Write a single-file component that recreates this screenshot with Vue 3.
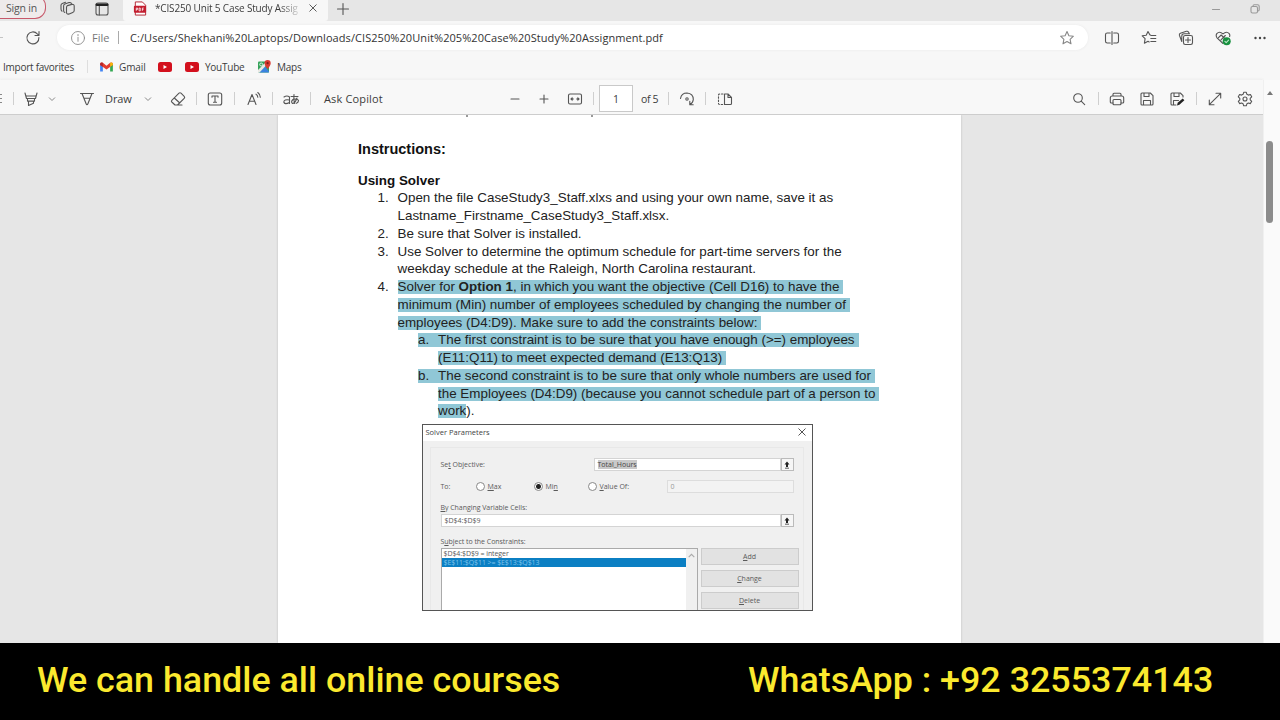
<script setup>
const steps = [
    { num: '1.', text: 'Open the file CaseStudy3_Staff.xlxs and using your own name, save it as' },
    { text: 'Lastname_Firstname_CaseStudy3_Staff.xlsx.' },
    { num: '2.', text: 'Be sure that Solver is installed.' },
    { num: '3.', text: 'Use Solver to determine the optimum schedule for part-time servers for the' },
    { text: 'weekday schedule at the Raleigh, North Carolina restaurant.' },
];
const subSteps = [
    { num: 'a.', text: 'The first constraint is to be sure that you have enough (>=) employees' },
    { text: '(E11:Q11) to meet expected demand (E13:Q13)' },
    { num: 'b.', text: 'The second constraint is to be sure that only whole numbers are used for' },
    { text: 'the Employees (D4:D9) (because you cannot schedule part of a person to' },
];
</script>

<template>
    <div class="screen">
        <div class="tabs">
            <div class="sign-in">Sign in</div>
            <svg class="icon workspaces" viewBox="0 0 16 16">
                <path d="M7.500 4.600l4.300-1.200q2.400-.3 2.400 1.700v4.300q0 1.500-1.500 2l-3.500 1.500q-2.700.8-2.700-1.700V6.600q0-1.500 1-2z M4.800 11.500Q3.600 11 3.600 9.500V5q0-1.500 1.300-2L9 1.600q1.500-.4 2.400.7 M2 10.200Q1 9.500 1 8V4.300Q1 3 2.300 2.400L5.500 1.200" />
            </svg>
            <svg class="icon vertical-tabs" viewBox="0 0 16 16">
                <rect x="2" y="2" width="12" height="12" rx="2" />
                <path d="M5.300 5v9" />
                <path class="heavy" d="M2.800 3.800h10.400" />
            </svg>
            <div class="tab">
                <svg class="pdf" viewBox="0 0 14 16">
                    <path d="M2 1h7.500L13 4.500V15H2z" fill="#fff" stroke="#b3202e" />
                    <rect x="0.5" y="5" width="13" height="7.5" rx="1" fill="#c31f30" />
                    <path d="M3 10.5v-3h1.400v1.500H3 M6 7.500v3h1.300V7.500z M9.500 10.500v-3H11 M9.500 9h1.200" fill="none" stroke="#fff" stroke-width="0.8" />
                </svg>
                <span class="tab-title">*CIS250 Unit 5 Case Study Assig</span>
                <svg class="icon close" viewBox="0 0 16 16"><path d="M4.300 4.300l7.400 7.400 M11.700 4.300l-7.400 7.400" /></svg>
            </div>
            <svg class="icon plus" viewBox="0 0 16 16"><path d="M8 2.500v11 M2.500 8h11" /></svg>
            <svg class="icon minimize" viewBox="0 0 16 16"><path d="M4.500 8.500h7" /></svg>
            <svg class="icon restore" viewBox="0 0 16 16">
                <rect x="4" y="5.500" width="6.500" height="6.500" rx="1.500" />
                <path d="M6 5.300V5q0-1.200 1.200-1.200h3.300Q12.200 3.800 12.200 5.500v3.300q0 1.200-1.200 1.200" />
            </svg>
        </div>

        <div class="address-bar">
            <span class="back-tip"></span>
            <svg class="icon reload" viewBox="0 0 16 16">
                <path d="M13.900 7.500A6 6 0 1 1 12.300 3.800L14 5.400 M14 1.500v4h-4" />
            </svg>
            <div class="url">
                <svg class="icon info" viewBox="0 0 16 16"><circle cx="8" cy="8" r="6.500" /><path d="M8 7.300v4 M8 4.500v1.200" /></svg>
                <span class="file">File</span>
                <span class="rule"></span>
                <span class="path">C:/Users/Shekhani%20Laptops/Downloads/CIS250%20Unit%205%20Case%20Study%20Assignment.pdf</span>
                <svg class="icon star" viewBox="0 0 16 16">
                    <path d="M8 1.600l1.900 4.100 4.500.5-3.300 3.100.9 4.500L8 11.600l-4 2.200.9-4.500L1.600 6.200l4.500-.5z" />
                </svg>
            </div>
            <div class="actions">
                <svg class="icon" viewBox="0 0 16 16">
                    <path d="M8 1.500v13 M6.300 3H3.200Q1.500 3 1.500 4.700v6.600Q1.500 13 3.200 13h3.100 M9.700 3h3.100q1.700 0 1.700 1.700v6.600q0 1.700-1.700 1.700H9.700" />
                </svg>
                <svg class="icon" viewBox="0 0 16 16">
                    <path d="M9.700 5.200 8.800 4.800 7 1.500 5.200 5.200l-4 .6 2.900 2.900-.7 4.500L7 11.300l1.200.7 M10.300 5.500h4.500 M9.800 8.500h5 M9.800 11.500h5" />
                </svg>
                <svg class="icon" viewBox="0 0 16 16">
                    <rect x="5.500" y="5.500" width="9" height="9" rx="1.700" />
                    <path d="M10 7.500v5 M7.500 10h5 M3.800 11.500 1.400 5.200Q1 3.800 2.400 3.300L8.400 1.300q1.500-.4 2.200 1l.6 1.300 M3.800 11.500V6q0-2.300 2.300-2.300h5.400" />
                </svg>
                <svg class="icon" viewBox="0 0 16 16">
                    <path d="M8 13.500 2 7.800Q.5 5.500 1.800 3.600 4.500.7 8 3.900 11.500.7 14.200 3.600 15.200 5 14.600 6.600 M3.500 7.700 6.200 5l4 4 M6 9.800 8.300 7.500l2-2" />
                    <circle class="health-dot" cx="11.700" cy="11.300" r="4" />
                    <path class="health-tick" d="M9.900 11.300l1.300 1.300 2.400-2.500" />
                </svg>
                <svg class="icon dots" viewBox="0 0 16 16">
                    <circle cx="3.500" cy="8" r="1.200" /><circle cx="8" cy="8" r="1.200" /><circle cx="12.500" cy="8" r="1.200" />
                </svg>
            </div>
        </div>

        <div class="favorites">
            <span class="import">Import favorites</span>
            <span class="rule"></span>
            <svg class="gmail" viewBox="0 0 14 11">
                <path d="M0 1.500V10.500h3V5z" fill="#4285f4" />
                <path d="M14 1.500V10.500h-3V5z" fill="#34a853" />
                <path d="M0 1.800Q.8-.4 3 .9l4 3.200L11 .9q2.200-1.300 3 .9v1.500L7 8.300 0 3.300z" fill="#e33b2e" />
                <path d="M0 1.800Q.8-.4 3 .9v4.400L0 3.200z" fill="#b3262a" />
                <path d="M14 1.800Q13.200-.4 11 .9v4.400l3-2.100z" fill="#f6b90a" />
            </svg>
            <span class="gmail-label">Gmail</span>
            <svg class="youtube" viewBox="0 0 14 10"><rect width="14" height="10" rx="2.500" fill="#d3101d" /><path d="M5.500 3v4L9 5z" fill="#fff" /></svg>
            <svg class="youtube second" viewBox="0 0 14 10"><rect width="14" height="10" rx="2.500" fill="#d3101d" /><path d="M5.500 3v4L9 5z" fill="#fff" /></svg>
            <span class="youtube-label">YouTube</span>
            <svg class="maps" viewBox="0 0 13 13">
                <rect y="1.500" width="11" height="11" rx="1" fill="#35a35a" />
                <path d="M1 12.500 7 6.500l4 5v1z" fill="#3b82e0" />
                <path d="M0 10 8.500 1.500 10 3.500 1.500 12.500H0z" fill="#e9e9e4" />
                <circle cx="3.200" cy="4.500" r="1.500" fill="none" stroke="#fff" stroke-width=".8" />
                <path d="M9.500 9Q6.500 5.500 6.500 3.200a3.100 3.100 0 0 1 6.200 0Q12.700 5.500 9.500 9z" fill="#d93a30" />
                <circle cx="9.600" cy="3.200" r="1.100" fill="#7c1c18" />
            </svg>
            <span class="maps-label">Maps</span>
        </div>

        <div class="viewer">
            <div class="reader">
                <div class="toolbar">
                    <div class="tools left">
                        <span class="contents-tip"></span>
                        <span class="rule r1"></span>
                        <svg class="icon highlighter" viewBox="0 0 16 16"><path d="M2 2l1.500 5.500h9L14 2 M3.300 5h9.400 M4.500 7.500v2.600h7V7.500 M5.500 10.200v4.300l5-2.300v-2" /></svg>
                        <svg class="chevron c1" viewBox="0 0 8 8"><path d="M1 2.500l3 3 3-3" /></svg>
                        <svg class="icon pen" viewBox="0 0 16 16"><path d="M1.500 2.500h13 M3 2.500 7 12.500q1 2.500 2 0L13 2.500 M5 7.300h6" /></svg>
                        <span class="draw">Draw</span>
                        <svg class="chevron c2" viewBox="0 0 8 8"><path d="M1 2.500l3 3 3-3" /></svg>
                        <svg class="icon eraser" viewBox="0 0 16 16"><path d="M1.800 9.400 9 2.200q1-1 2 0l3.200 3.200q1 1 0 2L7.500 14H5L1.800 11q-.8-.8 0-1.600z M4.300 7l5.500 5 M7.500 14H12" /></svg>
                        <span class="rule r2"></span>
                        <svg class="icon textbox" viewBox="0 0 16 16"><rect x="1.300" y="2" width="13.400" height="12" rx="2" /><path d="M5 6.300V5h6v1.300 M8 5v6.300 M6.500 11.300h3" /></svg>
                        <span class="rule r3"></span>
                        <svg class="icon aloud" viewBox="0 0 16 16"><path d="M2 13.500 6 3.500l4 10 M3.400 10.300h5.200 M10 3.200q1.800 1 1.800 3 M11.800 1.500q2.500 1.800 2.500 4.700" /></svg>
                        <span class="rule r4"></span>
                        <svg class="icon translate" viewBox="0 0 18 16"><path d="M2 6q3-2 5.500 0v6.500 M7.500 9Q2 8 1.800 11q.8 3 5.700.5 M9 5.500h7 M12 3.500q-.5 6 .8 9 M15 7q-2 5.500-4.500 5.500-2-1.700.5-4 4.500-1.500 5.500 1 0 2-2 2.700" /></svg>
                        <span class="rule r5"></span>
                        <span class="copilot">Ask Copilot</span>
                    </div>
                    <div class="tools middle">
                        <svg class="icon" viewBox="0 0 16 16"><path d="M4 8h8" /></svg>
                        <svg class="icon zoom-in" viewBox="0 0 16 16"><path d="M4 8h8 M8 4v8" /></svg>
                        <svg class="icon fit" viewBox="0 0 16 16"><rect x="1.500" y="3" width="13" height="10" rx="1.500" /><path class="solid" d="M3.200 8 5.500 5.800v1.500h1v1.400h-1v1.500z M12.800 8 10.500 5.800v1.500h-1v1.400h1v1.500z" /></svg>
                        <span class="rule r6"></span>
                        <span class="page-no">1</span>
                        <span class="of">of 5</span>
                        <span class="rule r7"></span>
                        <svg class="icon rotate" viewBox="0 0 16 16"><path d="M1.500 7.500Q2.500 2 8 2q6.300.5 6.300 6.500-.3 3.500-3.300 5 M10.800 10.300v3.400h3.400" /><circle cx="8" cy="8" r="1.200" /></svg>
                        <span class="rule r8"></span>
                        <svg class="icon page-view" viewBox="0 0 16 16"><path d="M7.500 3v10.500h6q1 0 1-1V6.500L11 3z M11 3v3.500h3.500" /><path class="dashed" d="M6 3H2.500q-1 0-1 1v8.500q0 1 1 1H6" /></svg>
                    </div>
                    <div class="tools right">
                        <svg class="icon" viewBox="0 0 16 16"><circle cx="7" cy="7" r="4.300" /><path d="M10.200 10.200l3.500 3.500" /></svg>
                        <span class="rule r9"></span>
                        <svg class="icon print" viewBox="0 0 16 16"><path d="M4 5V3.300Q4 2.300 5 2.300h6q1 0 1 1V5 M4 12H2.300Q1.300 12 1.300 11V7q0-2 2-2h9.400q2 0 2 2v4q0 1-1 1H12" /><rect x="4" y="8.500" width="8" height="5.300" rx="1" /></svg>
                        <svg class="icon save" viewBox="0 0 16 16"><path d="M2 3q0-1 1-1h8.300L14 4.700V13q0 1-1 1H3q-1 0-1-1z M5 2v3.500h5V2 M4.500 14V9.500h7V14" /></svg>
                        <svg class="icon save" viewBox="0 0 16 16"><path d="M7 14H3q-1 0-1-1V3q0-1 1-1h8.300L14 4.700V6 M5 2v3.500h5V2 M4.500 14V9.500h5" /><path class="pencil" d="M8 14.500l.7-2.700 5-4.300 1.700 1.700-5 4.600z" /></svg>
                        <span class="rule r10"></span>
                        <svg class="icon expand" viewBox="0 0 16 16"><path d="M2.300 13.700 13.700 2.300 M9 2.300h4.700V7 M2.300 9v4.700H7" /></svg>
                        <svg class="icon settings" viewBox="0 0 16 16"><path d="M6.700 1.300h2.600l.6 2 1.500.8 2-.6 1.300 2.300-1.500 1.500v1.500l1.500 1.500-1.300 2.300-2-.6-1.500.8-.6 2H6.700l-.6-2-1.500-.8-2 .6-1.300-2.300 1.500-1.500V7.300L1.300 5.800l1.300-2.300 2 .6 1.500-.8z" /><circle cx="8" cy="8" r="2" /></svg>
                    </div>
                </div>

                <div class="canvas">
                    <div class="page">
                        <div class="remnant"><i></i><i></i></div>
                        <h1>Instructions:</h1>
                        <h2>Using Solver</h2>
                        <div v-for="(line, i) in steps" :key="i" class="line">
                            <span class="num">{{ line.num }}</span>
                            <span class="copy">{{ line.text }}</span>
                        </div>
                        <div class="line">
                            <span class="num">4.</span>
                            <span class="copy marked">Solver for <b>Option 1</b>, in which you want the objective (Cell D16) to have the</span>
                        </div>
                        <div class="line"><span class="num"></span><span class="copy marked">minimum (Min) number of employees scheduled by changing the number of</span></div>
                        <div class="line"><span class="num"></span><span class="copy marked">employees (D4:D9). Make sure to add the constraints below:</span></div>
                        <div v-for="(line, i) in subSteps" :key="'s' + i" class="line sub">
                            <span class="num" :class="{ marked: line.num }">{{ line.num }}</span>
                            <span class="copy marked">{{ line.text }}</span>
                        </div>
                        <div class="line sub"><span class="num"></span><span class="copy marked tight">work</span><span class="copy">).</span></div>

                        <div class="dialog">
                            <div class="dialog-title">
                                <span>Solver Parameters</span>
                                <svg viewBox="0 0 8 8"><path d="M.5.5l7 7 M7.500.5l-7 7" /></svg>
                            </div>
                            <div class="dialog-body">
                                <div class="row objective">
                                    <label>Se<u>t</u> Objective:</label>
                                    <div class="field"><span class="selected">Total_Hours</span></div>
                                    <div class="picker"><svg viewBox="0 0 8 8"><path d="M4 .5 6.500 3.500H5V6H3V3.500H1.500z M2 6.700h4v.8H2z" /></svg></div>
                                </div>
                                <div class="row target">
                                    <span class="to">To:</span>
                                    <span class="radio"></span><span class="max"><u>M</u>ax</span>
                                    <span class="radio on"></span><span class="min">Mi<u>n</u></span>
                                    <span class="radio"></span><span class="value-of"><u>V</u>alue Of:</span>
                                    <div class="field off">0</div>
                                </div>
                                <div class="caption"><u>B</u>y Changing Variable Cells:</div>
                                <div class="row">
                                    <div class="field">$D$4:$D$9</div>
                                    <div class="picker"><svg viewBox="0 0 8 8"><path d="M4 .5 6.500 3.500H5V6H3V3.500H1.500z M2 6.700h4v.8H2z" /></svg></div>
                                </div>
                                <div class="caption subject">S<u>u</u>bject to the Constraints:</div>
                                <div class="row lists">
                                    <div class="listbox">
                                        <div class="items">
                                            <div class="item">$D$4:$D$9 = integer</div>
                                            <div class="item active">$E$11:$Q$11 &gt;= $E$13:$Q$13</div>
                                        </div>
                                        <div class="list-scroll"><svg viewBox="0 0 8 8"><path d="M1.500 5.500 4 3l2.500 2.500" /></svg></div>
                                    </div>
                                    <div class="buttons">
                                        <div class="button"><u>A</u>dd</div>
                                        <div class="button"><u>C</u>hange</div>
                                        <div class="button"><u>D</u>elete</div>
                                    </div>
                                </div>
                            </div>
                        </div>
                    </div>
                </div>
            </div>
            <div class="scrollbar">
                <span class="up"></span>
                <span class="thumb"></span>
            </div>
        </div>

        <div class="banner">
            <span class="claim">We can handle all online courses</span>
            <span class="phone">WhatsApp : +92 3255374143</span>
        </div>
    </div>
</template>

<style>
body {
    margin: 0;
    overflow: hidden;
}
</style>

<style scoped>
.screen {
    display: flex;
    flex-direction: column;
    width: 1280px;
    height: 720px;
    overflow: hidden;
    background: #f7f7f7;
    color: #3c3c3c;
    font-family: 'Open Sans', 'Noto Sans', sans-serif;
    font-size: 10px;
    white-space: nowrap;
}
.screen * {
    box-sizing: border-box;
    flex-shrink: 0;
}
svg {
    display: block;
}
.icon {
    width: 16px;
    height: 16px;
    fill: none;
    stroke: #555;
    stroke-width: 1.1;
    stroke-linecap: round;
    stroke-linejoin: round;
}
.rule {
    width: 1px;
    height: 13px;
    background: #cfcfcf;
}

/* tab strip */
.tabs {
    display: flex;
    align-items: center;
    height: 21px;
    padding-bottom: 4px;
    background: #e6e6e6;
}
.sign-in {
    width: 46px;
    height: 24px;
    margin-top: -3px;
    padding: 5px 0 0 6px;
    border: 1px solid #c7586a;
    border-left: 0;
    border-radius: 0 11px 11px 0;
    background: #efebeb;
    color: #555;
    font-size: 10.500px;
    letter-spacing: -0.2px;
}
.workspaces {
    margin-left: 14px;
}
.vertical-tabs {
    margin-left: 18px;
}
.heavy {
    stroke: #222;
    stroke-width: 2.4;
}
.tab {
    display: flex;
    align-items: center;
    width: 205px;
    height: 21px;
    margin: 4px 0 0 13px;
    padding: 0 0 5px 10px;
    border-radius: 0 0 3px 3px;
    background: #f7f7f7;
}
.pdf {
    width: 14px;
    height: 15px;
}
.tab-title {
    width: 148px;
    margin-left: 8px;
    letter-spacing: -0.16px;
    mask-image: linear-gradient(90deg, #000 124px, transparent 148px);
}
.close {
    width: 14px;
    height: 14px;
    margin-left: 3px;
}
.plus {
    margin-left: 7px;
}
.minimize {
    margin-left: auto;
    stroke: #999;
}
.restore {
    margin: 0 17px 0 23px;
    stroke: #999;
}

/* address bar */
.address-bar {
    display: flex;
    align-items: center;
    height: 33px;
}
.back-tip {
    width: 3px;
    height: 1px;
    background: #c4c4c4;
}
.reload {
    margin-left: 22px;
}
.url {
    display: flex;
    align-items: center;
    width: 1031px;
    height: 25px;
    margin-left: 16px;
    padding-left: 13px;
    border-radius: 13px;
    background: #fff;
    box-shadow: 0 0 3px #e9e9e9;
    font-size: 11px;
}
.info {
    stroke: #8a8a8a;
    stroke-width: 0.9;
}
.file {
    width: 19px;
    margin-left: 6px;
    color: #777;
}
.url .rule {
    margin-left: 7px;
    background: #aaa;
}
.path {
    width: 534px;
    margin-left: 11px;
    padding-bottom: 1px;
    color: #333;
    letter-spacing: 0.07px;
}
.star {
    margin-left: 395px;
    stroke: #888;
}
.actions {
    display: flex;
    gap: 21px;
    margin-left: 16px;
}
.dots {
    fill: #444;
    stroke: none;
}
.health-dot {
    fill: #17903f;
    stroke: none;
}
.health-tick {
    stroke: #bfe8ca;
}

/* favorites */
.favorites {
    display: flex;
    align-items: center;
    height: 26px;
    padding-bottom: 1px;
}
.import {
    width: 72px;
    margin-left: 3px;
    letter-spacing: -0.25px;
}
.favorites .rule {
    margin-left: 12px;
    background: #dedede;
}
.gmail {
    width: 13px;
    height: 10px;
    margin-left: 12px;
}
.gmail-label {
    width: 26px;
    margin-left: 6px;
    letter-spacing: -0.1px;
}
.youtube {
    width: 14px;
    height: 10px;
    margin-left: 13px;
}
.youtube.second {
    margin-left: 13px;
}
.youtube-label {
    width: 39px;
    margin-left: 6px;
    letter-spacing: -0.25px;
}
.maps {
    width: 13px;
    height: 13px;
    margin-left: 14px;
}
.maps-label {
    margin-left: 6px;
    letter-spacing: -0.25px;
}

/* viewer */
.viewer {
    display: flex;
    height: 563px;
}
.reader {
    width: 1263px;
}
.toolbar {
    display: flex;
    align-items: center;
    height: 35px;
    padding-top: 3px;
    border-bottom: 1px solid #cdcdcd;
    background: #f8f8f8;
    box-shadow: 0 -1px 2px #ededed;
    font-size: 11px;
}
.tools {
    display: flex;
    align-items: center;
}
.left {
    width: 507px;
}
.middle {
    width: 564px;
}
.contents-tip {
    width: 2px;
    height: 9px;
    background: repeating-linear-gradient(#888 0 1px, transparent 1px 4px);
}
.r1 {
    margin-left: 11px;
}
.highlighter {
    margin-left: 9px;
}
.chevron {
    width: 8px;
    height: 8px;
    fill: none;
    stroke: #888;
}
.c1 {
    margin-left: 9px;
}
.pen {
    margin-left: 23px;
}
.draw {
    width: 27px;
    margin-left: 10px;
    letter-spacing: -0.1px;
}
.c2 {
    margin-left: 12px;
}
.eraser {
    margin-left: 18px;
}
.r2 {
    margin-left: 10px;
}
.textbox {
    margin-left: 10px;
}
.r3 {
    margin-left: 11px;
}
.aloud {
    margin-left: 11px;
}
.r4 {
    margin-left: 10px;
}
.translate {
    width: 18px;
    margin-left: 9px;
}
.r5 {
    margin-left: 10px;
}
.copilot {
    margin-left: 13px;
    letter-spacing: 0.15px;
}
.zoom-in {
    margin-left: 13px;
}
.fit {
    margin-left: 15px;
}
.solid {
    fill: #555;
    stroke: none;
}
.r6 {
    margin-left: 10px;
}
.page-no {
    width: 34px;
    height: 27px;
    margin-left: 5px;
    border: 1px solid #c9c9c9;
    background: #fff;
    font-size: 10.500px;
    line-height: 26px;
    text-align: center;
}
.of {
    width: 18px;
    margin-left: 8px;
    font-size: 10.500px;
    letter-spacing: -0.35px;
}
.r7 {
    margin-left: 9px;
}
.rotate {
    margin-left: 10px;
}
.r8 {
    margin-left: 10px;
}
.page-view {
    margin-left: 11px;
}
.dashed {
    stroke-dasharray: 1.5 1.8;
}
.r9 {
    margin-left: 11px;
}
.print {
    margin-left: 10px;
}
.save {
    margin-left: 14px;
}
.pencil {
    fill: #222;
    stroke: none;
}
.r10 {
    margin-left: 11px;
}
.expand {
    margin-left: 10px;
}
.settings {
    margin-left: 14px;
}
.canvas {
    display: flex;
    height: 528px;
    padding-left: 278px;
    overflow: hidden;
    background: #e6e6e6;
}
.scrollbar {
    display: flex;
    flex-direction: column;
    align-items: center;
    width: 17px;
    padding-right: 5px;
    border-left: 1px solid #f0f0f0;
    background: #fafafa;
}
.up {
    margin-top: 11px;
    border: 3.5px solid transparent;
    border-top: 0;
    border-bottom: 4px solid #777;
}
.thumb {
    width: 7px;
    height: 82px;
    margin-top: 46px;
    border-radius: 4px;
    background: #8c8c8c;
}

/* document page */
.page {
    width: 683px;
    height: 528px;
    padding-left: 80px;
    background: #fff;
    box-shadow: 0 0 2px #bbb;
    color: #222;
    font-family: 'Liberation Sans', Arial, sans-serif;
    font-size: 13.4px;
}
.remnant {
    display: flex;
    gap: 123px;
    height: 2px;
    padding-left: 108px;
}
.remnant i {
    width: 2px;
    height: 2px;
    background: #999;
}
h1,
h2 {
    margin: 0;
    color: #111;
    font-size: 14.5px;
    line-height: 18px;
}
h1 {
    margin-top: 23px;
}
h2 {
    margin-top: 14px;
    margin-bottom: -0.5px;
    font-size: 13.4px;
}
.line {
    display: flex;
    align-items: center;
    height: 17.75px;
    padding-left: 19.5px;
}
.num {
    width: 20px;
    height: 14px;
    line-height: 14px;
}
.copy {
    height: 14px;
    line-height: 14px;
    letter-spacing: 0.007px;
}
.marked {
    padding-right: 4px;
    background: #90c7d6;
}
.tight {
    padding-right: 0;
}
.sub {
    padding-left: 60px;
}

/* solver dialog */
.dialog {
    width: 391px;
    height: 187px;
    margin: 4px 0 0 63.5px;
    overflow: hidden;
    border: 1.5px solid #555;
    background: #f0f0f0;
    color: #5a5a5a;
    font-family: 'Open Sans', 'Noto Sans', sans-serif;
    font-size: 7px;
}
.dialog-title {
    display: flex;
    align-items: center;
    justify-content: space-between;
    height: 16px;
    padding: 0 6px 2px 3px;
    background: #fff;
    color: #444;
    font-size: 7.5px;
}
.dialog-title svg {
    width: 8px;
    height: 8px;
    fill: none;
    stroke: #555;
}
.dialog-body {
    height: 190px;
    margin: 6px 8px 0 7px;
    padding: 10px 0 0 10px;
    border: 1px solid #e8e8e8;
}
.row {
    display: flex;
    align-items: center;
}
.field {
    display: flex;
    align-items: center;
    width: 340px;
    height: 13px;
    padding-left: 3px;
    border: 1px solid #d4d4d4;
    background: #fff;
}
.objective label {
    width: 153px;
}
.objective .field {
    width: 187px;
}
.selected {
    background: #c9c9c9;
    color: #444;
    line-height: 9px;
}
.picker {
    display: flex;
    align-items: center;
    justify-content: center;
    width: 13px;
    height: 13px;
    border: 1px solid #bbb;
    background: #f6f6f6;
}
.picker svg {
    width: 8px;
    height: 8px;
    fill: #222;
}
.target {
    height: 14px;
    margin-top: 8px;
}
.to {
    width: 35px;
}
.radio {
    width: 9px;
    height: 9px;
    border: 1px solid #888;
    border-radius: 50%;
    background: #fff;
}
.on {
    background: radial-gradient(circle, #222 2px, #fff 3px);
}
.max {
    width: 49px;
    padding-left: 3px;
}
.min {
    width: 45px;
    padding-left: 3px;
}
.value-of {
    width: 70px;
    padding-left: 3px;
}
.off {
    width: 127px;
    border-color: #ddd;
    background: #f3f3f3;
    color: #999;
}
.caption {
    height: 10px;
    margin-top: 10px;
    margin-bottom: 1px;
    line-height: 10px;
    letter-spacing: -0.04px;
}
.subject {
    margin-top: 10px;
}
.lists {
    align-items: flex-start;
}
.listbox {
    display: flex;
    width: 257px;
    height: 80px;
    border: 1px solid #aaa;
    background: #fff;
}
.items {
    width: 244px;
}
.item {
    height: 9px;
    padding-left: 2px;
    line-height: 9px;
    letter-spacing: -0.08px;
}
.active {
    background: #0b7fc3;
    color: #7fc4ec;
}
.list-scroll {
    width: 11px;
    padding: 2px 1px;
    background: #f0f0f0;
}
.list-scroll svg {
    fill: none;
    stroke: #aaa;
}
.buttons {
    display: flex;
    flex-direction: column;
    gap: 5px;
    margin-left: 3px;
}
.button {
    width: 98px;
    height: 17px;
    border: 1px solid #ccc;
    background: #e2e2e2;
    line-height: 15px;
    text-align: center;
}

/* promo banner */
.banner {
    display: flex;
    align-items: center;
    height: 77px;
    padding: 0 0 3px 37px;
    background: #000;
    color: #fbe92e;
    font-family: Roboto, sans-serif;
    font-size: 35.85px;
    font-weight: 500;
}
.claim {
    width: 711px;
}
</style>
